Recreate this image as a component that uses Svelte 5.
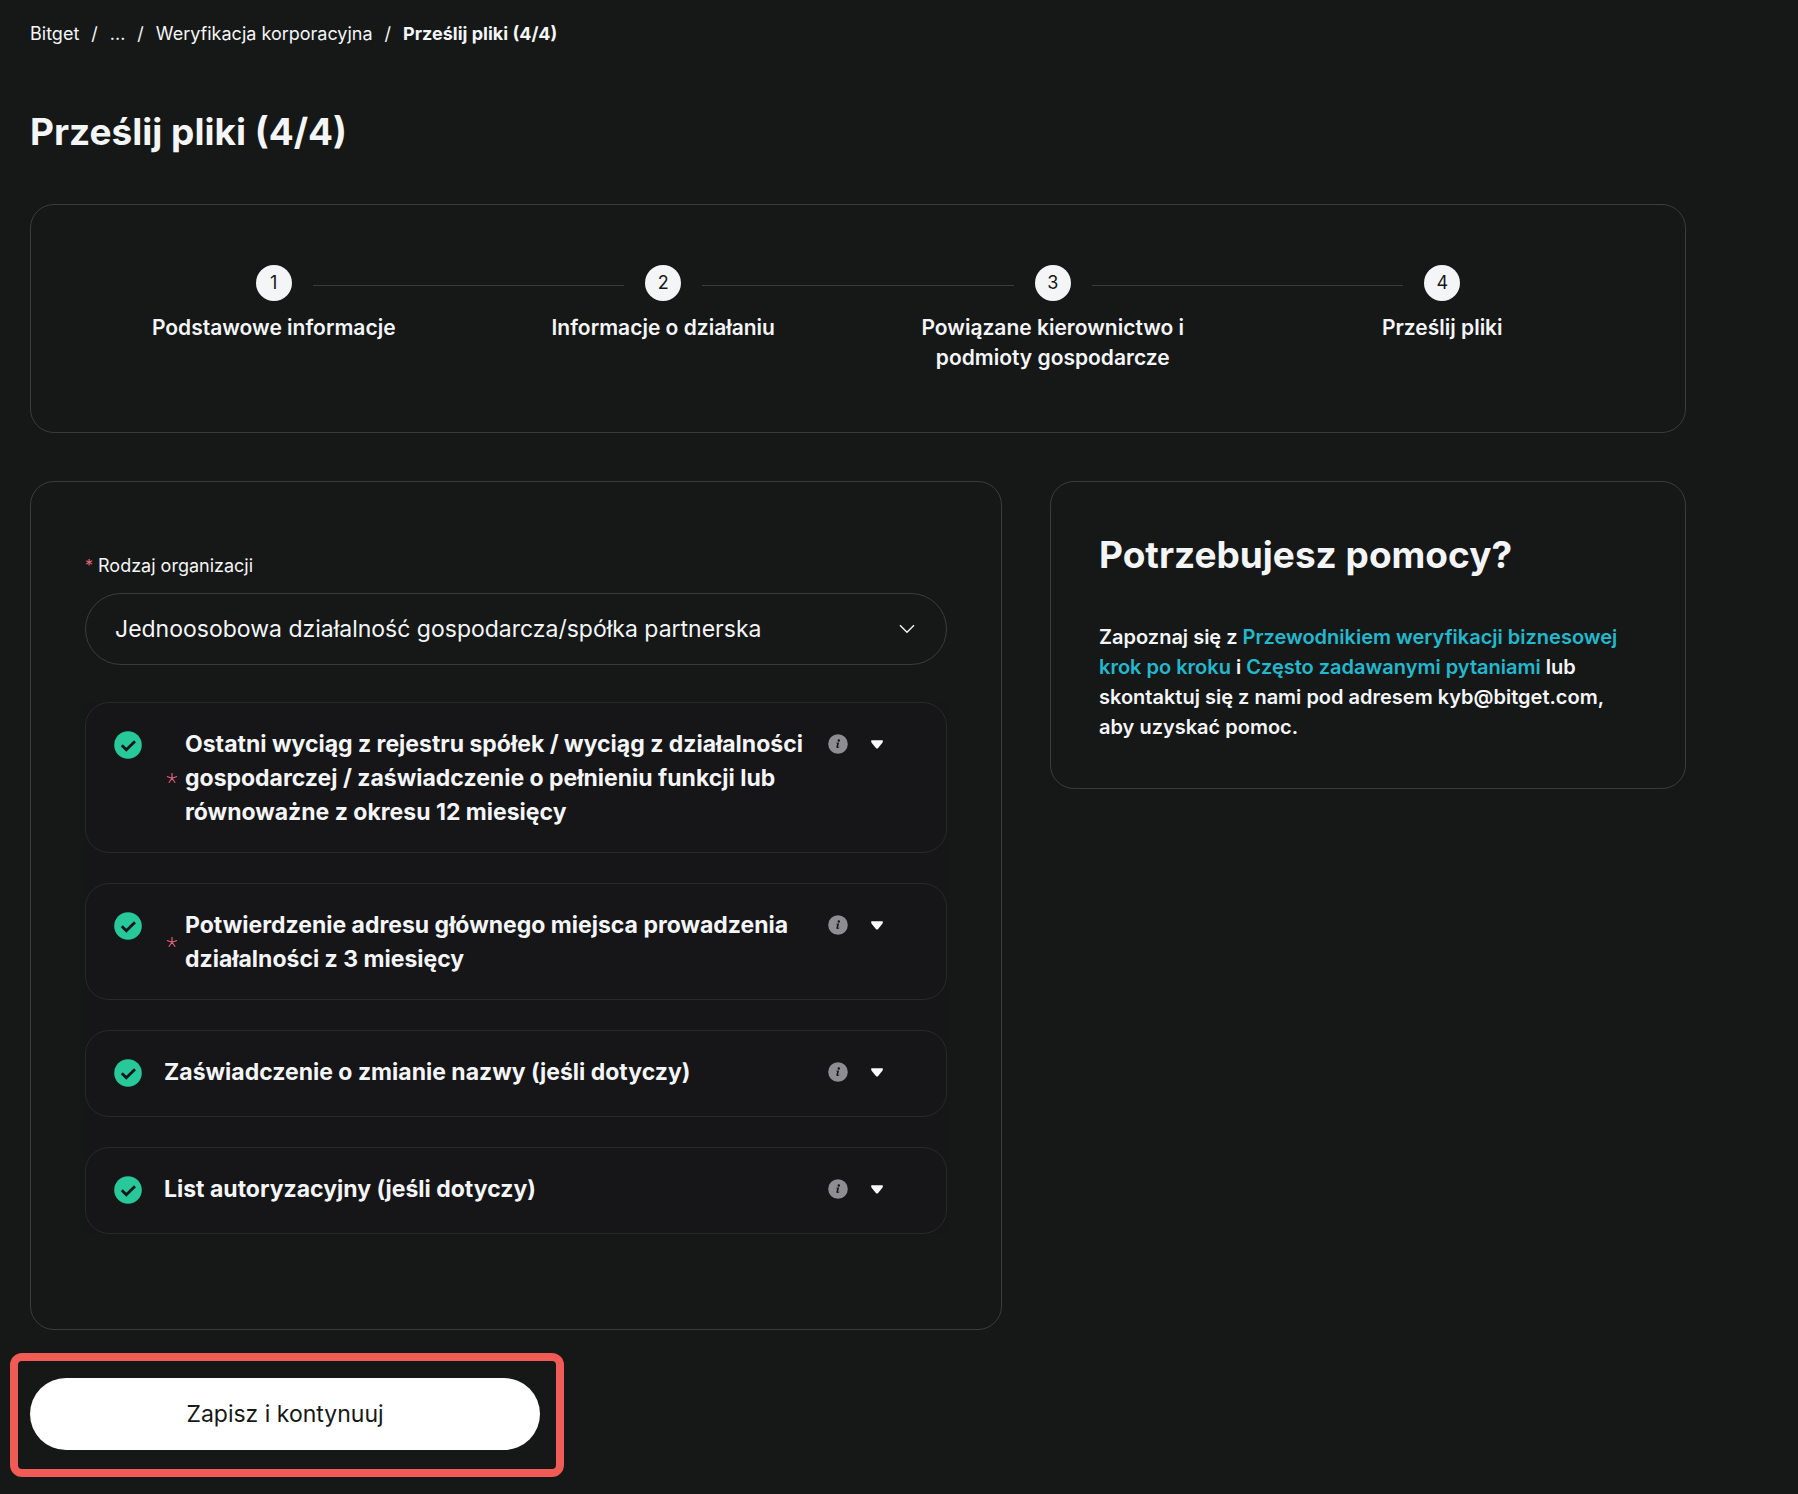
<script>
  const steps = [
    'Podstawowe informacje',
    'Informacje o działaniu',
    'Powiązane kierownictwo i podmioty gospodarcze',
    'Prześlij pliki',
  ];

  const documents = [
    {
      title:
        'Ostatni wyciąg z rejestru spółek / wyciąg z działalności gospodarczej / zaświadczenie o pełnieniu funkcji lub równoważne z okresu 12 miesięcy',
      required: true,
    },
    { title: 'Potwierdzenie adresu głównego miejsca prowadzenia działalności z 3 miesięcy', required: true },
    { title: 'Zaświadczenie o zmianie nazwy (jeśli dotyczy)', required: false },
    { title: 'List autoryzacyjny (jeśli dotyczy)', required: false },
  ];

  let organization = $state('partnership');
</script>

<div class="page">
  <nav class="breadcrumb" aria-label="Okruszki">
    <a href="#home">Bitget</a>
    <span>/</span>
    <a href="#more">...</a>
    <span>/</span>
    <a href="#verification">Weryfikacja korporacyjna</a>
    <span>/</span>
    <strong aria-current="page">Prześlij pliki (4/4)</strong>
  </nav>

  <h1>Prześlij pliki (4/4)</h1>

  <ol class="card steps">
    {#each steps as step, i}
      <li>
        <div class="marker">
          <span class="line" class:hidden={i === 0}></span>
          <span class="circle">{i + 1}</span>
          <span class="line" class:hidden={i === steps.length - 1}></span>
        </div>
        <span class="step-label">{step}</span>
      </li>
    {/each}
  </ol>

  <div class="columns">
    <main class="card form">
      <label for="organization"><span class="star">*</span>Rodzaj organizacji</label>
      <div class="select">
        <select id="organization" bind:value={organization}>
          <option value="partnership">Jednoosobowa działalność gospodarcza/spółka partnerska</option>
        </select>
        <svg width="16" height="10" viewBox="0 0 16 10" fill="none" aria-hidden="true">
          <path d="M1 1.2 8 8.2 15 1.2" stroke="#f4f5f7" stroke-width="1.4" />
        </svg>
      </div>

      <div class="documents">
        {#each documents as doc}
          <section class="document">
            <svg class="check" width="28" height="28" viewBox="0 0 28 28" aria-hidden="true">
              <circle cx="14" cy="14" r="13.8" fill="#27c99b" />
              <path d="M7.8 14.2 12.3 18.7 21 10.2" fill="none" stroke="#161618" stroke-width="2.8" />
            </svg>
            <div class="heading">
              {#if doc.required}
                <svg class="required" width="12" height="12" viewBox="0 0 12 12" role="img" aria-label="wymagane">
                  <path
                    d="M6 6.2V1M6 6.2 1 4.4M6 6.2 11 4.4M6 6.2 2.8 10.8M6 6.2 9.2 10.8"
                    fill="none"
                    stroke="#e8647a"
                    stroke-width="1.1"
                  />
                </svg>
              {/if}
              <h2>{doc.title}</h2>
            </div>
            <button class="icon" type="button" aria-label="Informacje">
              <svg width="20" height="20" viewBox="0 0 20 20">
                <circle cx="10" cy="10" r="9.8" fill="#8d8d92" />
                <circle cx="10.8" cy="6.5" r="1.2" fill="#161618" />
                <path
                  d="M8.2 8.7 11.1 8.4 10.1 12.6Q10 13.2 11.3 12.5L11.5 12.9Q10.2 14 9.1 13.9 8.2 13.7 8.4 12.7L9.2 9.4 8.1 9.2Z"
                  fill="#161618"
                />
              </svg>
            </button>
            <button class="icon" type="button" aria-label="Rozwiń">
              <svg width="12" height="9" viewBox="0 0 12 9">
                <path d="M.8 .2H11.2Q12.1 .3 11.9 1.3L11.4 2.8 6.9 8.2Q6 9 5.1 8.2L.6 2.8 .1 1.3Q-.1 .3 .8 .2Z" fill="#fafafc" />
              </svg>
            </button>
          </section>
        {/each}
      </div>
    </main>

    <aside class="card help">
      <h2>Potrzebujesz pomocy?</h2>
      <p>
        Zapoznaj się z <a href="#guide">Przewodnikiem weryfikacji biznesowej krok po kroku</a> i
        <a href="#faq">Często zadawanymi pytaniami</a> lub skontaktuj się z nami pod adresem kyb@bitget.com, aby
        uzyskać pomoc.
      </p>
    </aside>
  </div>

  <div class="submit">
    <button type="submit">Zapisz i kontynuuj</button>
  </div>
</div>

<style>
  :global(body) {
    background: #161817;
  }

  .page {
    box-sizing: border-box;
    min-height: 100vh;
    padding: 20px 112px 44px 30px;
    color: #f4f5f7;
    font-family: Inter, 'Liberation Sans', sans-serif;
  }

  h1,
  h2,
  p,
  ol {
    margin: 0;
    padding: 0;
  }

  a {
    color: inherit;
    text-decoration: none;
  }

  button {
    border: 0;
    padding: 0;
    font: inherit;
    cursor: pointer;
  }

  svg {
    display: block;
  }

  .breadcrumb {
    display: flex;
    gap: 12px;
    font-size: 18px;
    line-height: 28px;
  }

  .breadcrumb strong {
    font-weight: 700;
  }

  h1 {
    margin: 60px 0 48px;
    font-size: 37px;
    font-weight: 700;
    line-height: 48px;
  }

  .card {
    border: 1px solid #3a3b3d;
    border-radius: 24px;
  }

  .steps {
    display: grid;
    grid-template-columns: repeat(4, 1fr);
    padding: 60px 48px 59px;
    list-style: none;
  }

  .steps li {
    display: flex;
    flex-direction: column;
    align-items: center;
    gap: 12px;
  }

  .marker {
    display: flex;
    align-items: center;
    gap: 21px;
    width: 100%;
  }

  .line {
    flex: 1;
    height: 1px;
    margin-top: 4px;
    background: #3a3b3d;
  }

  /* Neighbouring segments meet at the column edge; the outer ones only keep the circle centred. */
  .line.hidden {
    visibility: hidden;
  }

  .circle {
    width: 36px;
    border-radius: 50%;
    background: #f4f5f7;
    color: #161817;
    font-size: 18px;
    line-height: 36px;
    text-align: center;
  }

  .step-label {
    max-width: 280px;
    font-size: 21px;
    font-weight: 600;
    line-height: 30px;
    text-align: center;
  }

  .columns {
    display: grid;
    grid-template-columns: 972fr 636fr;
    align-items: start;
    gap: 48px;
    margin-top: 48px;
  }

  .form {
    padding: 69px 54px 95px;
  }

  label {
    display: flex;
    gap: 5px;
    font-size: 18px;
    line-height: 30px;
  }

  .star {
    color: #e8647a;
    font-size: 16px;
    line-height: 28px;
  }

  .select {
    display: grid;
    align-items: center;
    margin-top: 12px;
  }

  .select > * {
    grid-area: 1 / 1;
  }

  .select svg {
    justify-self: end;
    margin-right: 32px;
    pointer-events: none;
  }

  select {
    width: 100%;
    height: 72px;
    padding: 0 72px 0 29px;
    appearance: none;
    border: 1px solid #3a3b3d;
    border-radius: 36px;
    background: transparent;
    color: inherit;
    font: 400 23px Inter, 'Liberation Sans', sans-serif;
  }

  .documents {
    display: grid;
    gap: 30px;
    margin-top: 37px;
    background: #161618;
  }

  .document {
    display: grid;
    grid-template-columns: 28px 1fr 20px 24px;
    column-gap: 17px;
    align-items: start;
    padding: 24px 57px 23px 28px;
    border: 1px solid #28292b;
    border-radius: 24px;
  }

  .check {
    margin-top: 4px;
  }

  .heading {
    display: flex;
    gap: 7px;
    min-height: 38px;
    margin-left: 5px;
  }

  .required {
    flex: none;
    align-self: center;
    margin-left: 2px;
  }

  .heading h2 {
    font-size: 23px;
    font-weight: 700;
    line-height: 34px;
  }

  .icon {
    display: flex;
    align-items: center;
    justify-content: center;
    height: 34px;
    background: none;
  }

  .help {
    padding: 48px 48px 46px;
  }

  .help h2 {
    font-size: 37px;
    font-weight: 700;
    line-height: 50px;
  }

  .help p {
    margin-top: 42px;
    font-size: 20px;
    font-weight: 600;
    line-height: 30px;
  }

  .help a {
    color: #22b8cf;
  }

  .submit {
    position: relative;
    width: 510px;
    max-width: 100%;
    margin-top: 48px;
  }

  .submit button {
    width: 100%;
    height: 72px;
    border-radius: 36px;
    background: #fff;
    color: #161817;
    font-size: 23px;
  }

  .submit::after {
    content: '';
    position: absolute;
    inset: -25px -24px -27px -20px;
    border: 8px solid #f05b56;
    border-radius: 12px;
    pointer-events: none;
  }
</style>
